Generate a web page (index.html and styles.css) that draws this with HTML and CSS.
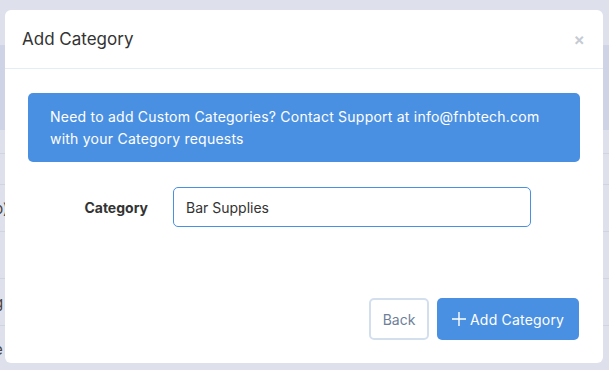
FILE: index.html
```html
<!DOCTYPE html>
<html>
<head>
<meta charset="utf-8">
<link rel="stylesheet" href="styles.css">
</head>
<body>
<div class="page">
  <div class="page-top"></div>
  <div class="page-band"></div>
  <div class="page-gap"></div>
  <div class="row r1"></div>
  <div class="row"><span>p)</span></div>
  <div class="row"><span>t</span></div>
  <div class="row"><span>g</span></div>
  <div class="row"><span>e</span></div>
</div>
<div class="modal">
  <div class="modal-header">
    <h4 class="modal-title">Add Category</h4>
    <span class="close">×</span>
  </div>
  <div class="modal-body">
    <div class="alert">Need to add Custom Categories? Contact Support at info@fnbtech.com<br>with your Category requests</div>
    <div class="form-row">
      <label class="form-label">Category</label>
      <input class="form-input" type="text" value="Bar Supplies">
    </div>
  </div>
  <div class="modal-footer">
    <button class="btn btn-back">Back</button>
    <button class="btn btn-primary"><svg class="plus" width="16" height="16" viewBox="0 0 16 16"><path d="M8 1v14M1 8h14" stroke="#fff" stroke-width="1.4" fill="none"/></svg>Add Category</button>
  </div>
</div>
</body>
</html>
```
FILE: styles.css
```css
html, body {
  margin: 0;
  padding: 0;
  width: 609px;
  height: 370px;
  overflow: hidden;
  font-family: "Inter", "Open Sans", sans-serif;
}
.page {
  background: #dee1ec;
  height: 370px;
}
.page-top { height: 45px; background: #dee1ec; }
.page-band { height: 85px; background: #ced4e6; }
.page-gap { height: 23px; background: #dee1ec; border-bottom: 1px solid #cfd4e2; }
.row {
  height: 46px;
  border-bottom: 1px solid #cfd4e2;
  display: flex;
  align-items: center;
  font-size: 15px;
  color: #444;
}
.row span { margin-left: -6px; }
.r1 { height: 30px; }
.modal {
  position: absolute;
  left: 5px;
  top: 10px;
  width: 598px;
  height: 353px;
  background: #fff;
  border-radius: 6px;
  display: flex;
  flex-direction: column;
}
.modal-header {
  height: 58px;
  border-bottom: 1px solid #e4ecf6;
  display: flex;
  align-items: center;
  justify-content: space-between;
  padding: 0 18px 0 17px;
}
.modal-title {
  margin: 0;
  font-size: 17px;
  font-weight: 400;
  color: #333;
}
.close {
  color: #c5cad3;
  font-size: 17px;
  font-weight: 600;
}
.modal-body {
  padding: 24px 23px 0 23px;
  flex: 1;
}
.alert {
  background: #4a90e2;
  color: #fff;
  border-radius: 5px;
  padding: 13px 22px 12px 22px;
  font-size: 14px;
  line-height: 22px;
  letter-spacing: 0.23px;
}
.form-row {
  display: flex;
  align-items: center;
  margin-top: 25px;
}
.form-label {
  width: 120px;
  text-align: right;
  padding-right: 25px;
  font-size: 14px;
  font-weight: 700;
  color: #333;
}
.form-input {
  width: 358px;
  height: 40px;
  box-sizing: border-box;
  border: 1px solid #4a90e2;
  border-radius: 5px;
  padding: 0 12px;
  font-family: inherit;
  font-size: 14px;
  color: #333;
  outline: none;
}
.modal-footer {
  display: flex;
  justify-content: flex-end;
  gap: 8px;
  padding: 0 24px 23px 0;
}
.btn {
  height: 42px;
  box-sizing: border-box;
  border-radius: 5px;
  font-family: inherit;
  font-size: 14px;
  display: flex;
  align-items: center;
}
.btn-back {
  width: 60px;
  justify-content: center;
  background: #fff;
  border: 2px solid #d4dfee;
  color: #6e7f99;
}
.btn-primary {
  width: 142px;
  background: #4a90e2;
  border: none;
  color: #fff;
  padding: 0 14px;
  gap: 3px;
  letter-spacing: 0.2px;
}
.plus { flex: none; }
```
